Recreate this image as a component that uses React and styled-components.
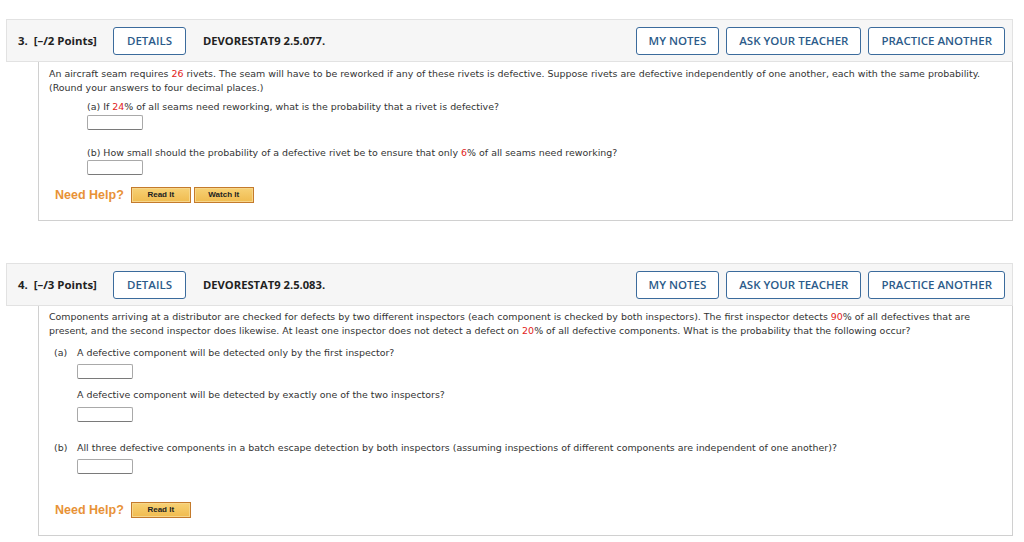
import React from "react";
import styled, { createGlobalStyle } from "styled-components";

const Global = createGlobalStyle`
  html, body { margin: 0; padding: 0; background: #fff; }
  body { font-family: "DejaVu Sans", Verdana, sans-serif; }
`;

const Page = styled.div`
  padding: 19px 11px 0 6px;
  display: flex;
  flex-direction: column;
  gap: 42px;
`;

const Question = styled.section`
  display: flex;
  flex-direction: column;
`;

const Header = styled.div`
  height: 41px;
  background: #f6f6f6;
  border: 1px solid #e2e2e2;
  display: flex;
  align-items: center;
  padding: 0 7px 0 11px;
  font-family: "Open Sans", sans-serif;
`;

const Points = styled.span`
  font-weight: 700;
  font-size: 11.4px;
  color: #222;
  width: 95px;
  white-space: pre;
`;

const Title = styled.span`
  font-weight: 700;
  font-size: 11.2px;
  color: #222;
  margin-left: 17px;
  flex: 1;
`;

const HeaderButton = styled.button`
  height: 28px;
  box-sizing: border-box;
  padding: 0 ${(p) => p.$pad || 12}px;
  border: 1.5px solid #3b6b9c;
  border-radius: 3px;
  background: #fff;
  color: #2c5b8a;
  font-family: "Open Sans", sans-serif;
  font-weight: 600;
  font-size: 11.5px;
  cursor: pointer;
  & + & { margin-left: 7px; }
`;

const Body = styled.div`
  margin-left: 32px;
  border: 1px solid #d0d0d0;
  border-top: none;
  padding: ${(p) => p.$pt}px 10px ${(p) => p.$pb}px 10px;
  font-size: 9.45px;
  line-height: 14px;
  color: #333;
`;

const Para = styled.p`
  margin: 0;
`;

const Red = styled.span`
  color: #e2231a;
`;

const Part = styled.div`
  margin: ${(p) => p.$mt || 0}px 0 0 ${(p) => p.$ml || 0}px;
  display: flex;
  flex-direction: column;
  align-items: flex-start;
`;

const PartRow = styled.div`
  display: grid;
  grid-template-columns: 23px auto;
  margin: ${(p) => p.$mt || 0}px 0 0 ${(p) => p.$ml || 0}px;
`;

const Label = styled.span``;

const Cell = styled.div`
  grid-column: 2;
  display: flex;
  flex-direction: column;
  align-items: flex-start;
`;

const Prompt = styled.span`
  margin-top: ${(p) => p.$mt || 0}px;
`;

const Input = styled.input`
  box-sizing: border-box;
  width: 56px;
  height: 15px;
  margin-top: ${(p) => p.$mt || 0}px;
  border: 1px solid #a9a9a9;
  border-bottom-color: #7a7a7a;
  border-radius: 2px;
  padding: 0;
`;

const Help = styled.div`
  display: flex;
  align-items: center;
  margin: ${(p) => p.$mt}px 0 0 6px;
  gap: 3px;
`;

const HelpLabel = styled.span`
  font-family: "Liberation Sans", Arial, sans-serif;
  font-weight: 700;
  font-size: 12.5px;
  color: #e89236;
  margin-right: 4px;
`;

const HelpButton = styled.button`
  width: 60px;
  height: 16px;
  box-sizing: border-box;
  padding: 0;
  border: 1px solid #c47a2c;
  box-shadow: inset 0 0 0 1px #f6d68a;
  background: linear-gradient(#f7d175, #f0bb4f);
  font-family: "Liberation Sans", Arial, sans-serif;
  font-weight: 700;
  font-size: 8px;
  color: #222;
  line-height: 14px;
`;

export default function App() {
  return (
    <>
      <Global />
      <Page>
        <Question>
          <Header>
            <Points>{"3.  [–/2 Points]"}</Points>
            <HeaderButton $pad={13}>DETAILS</HeaderButton>
            <Title>DEVORESTAT9 2.5.077.</Title>
            <HeaderButton>MY NOTES</HeaderButton>
            <HeaderButton>ASK YOUR TEACHER</HeaderButton>
            <HeaderButton>PRACTICE ANOTHER</HeaderButton>
          </Header>
          <Body $pt={5} $pb={17}>
            <Para>
              An aircraft seam requires <Red>26</Red> rivets. The seam will have to be reworked if any of these rivets is defective. Suppose rivets are defective independently of one another, each with the same probability.
              <br />
              (Round your answers to four decimal places.)
            </Para>
            <Part $mt={5} $ml={38}>
              <span>
                (a) If <Red>24</Red>% of all seams need reworking, what is the probability that a rivet is defective?
              </span>
              <Input $mt={1} />
            </Part>
            <Part $mt={16} $ml={38}>
              <span>
                (b) How small should the probability of a defective rivet be to ensure that only <Red>6</Red>% of all seams need reworking?
              </span>
              <Input />
            </Part>
            <Help $mt={12}>
              <HelpLabel>Need Help?</HelpLabel>
              <HelpButton>Read It</HelpButton>
              <HelpButton>Watch It</HelpButton>
            </Help>
          </Body>
        </Question>

        <Question>
          <Header>
            <Points>{"4.  [–/3 Points]"}</Points>
            <HeaderButton $pad={13}>DETAILS</HeaderButton>
            <Title>DEVORESTAT9 2.5.083.</Title>
            <HeaderButton>MY NOTES</HeaderButton>
            <HeaderButton>ASK YOUR TEACHER</HeaderButton>
            <HeaderButton>PRACTICE ANOTHER</HeaderButton>
          </Header>
          <Body $pt={4} $pb={17}>
            <Para>
              Components arriving at a distributor are checked for defects by two different inspectors (each component is checked by both inspectors). The first inspector detects <Red>90</Red>% of all defectives that are present, and the second inspector does likewise. At least one inspector does not detect a defect on <Red>20</Red>% of all defective components. What is the probability that the following occur?
            </Para>
            <PartRow $mt={8} $ml={5}>
              <Label>(a)</Label>
              <Cell>
                <Prompt>A defective component will be detected only by the first inspector?</Prompt>
                <Input $mt={4} />
                <Prompt $mt={9}>A defective component will be detected by exactly one of the two inspectors?</Prompt>
                <Input $mt={5} />
              </Cell>
            </PartRow>
            <PartRow $mt={19} $ml={5}>
              <Label>(b)</Label>
              <Cell>
                <Prompt>All three defective components in a batch escape detection by both inspectors (assuming inspections of different components are independent of one another)?</Prompt>
                <Input $mt={4} />
              </Cell>
            </PartRow>
            <Help $mt={28}>
              <HelpLabel>Need Help?</HelpLabel>
              <HelpButton>Read It</HelpButton>
            </Help>
          </Body>
        </Question>
      </Page>
    </>
  );
}
